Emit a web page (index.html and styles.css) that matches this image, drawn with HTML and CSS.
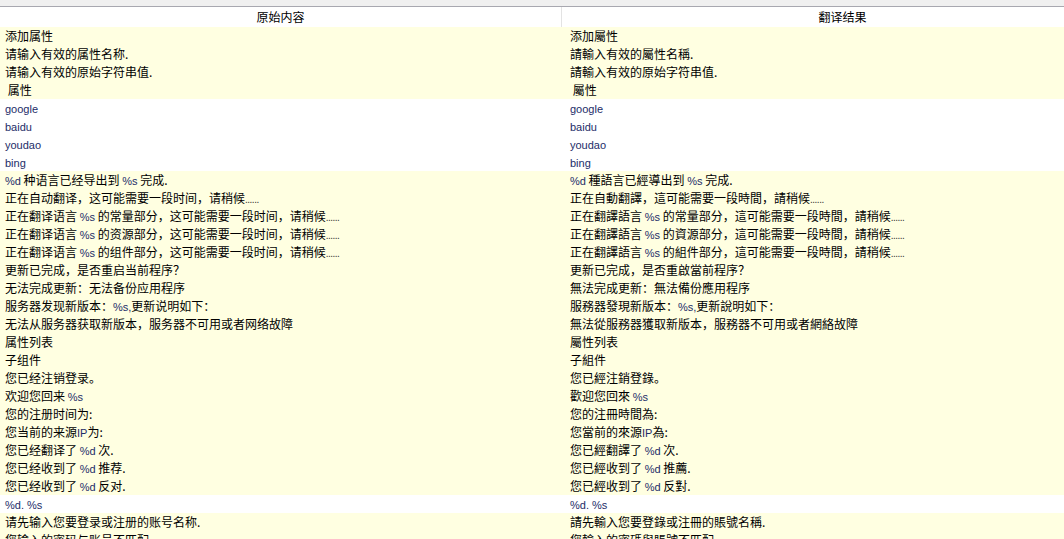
FILE: index.html
```html
<!DOCTYPE html>
<html lang="zh">
<head>
<meta charset="utf-8">
<title>翻译</title>
<link rel="stylesheet" href="styles.css">
</head>
<body>
<div class="topstrip"></div>
<div class="table">
  <div class="row head">
    <div class="cell hl">原始内容</div>
    <div class="cell hr">翻译结果</div>
  </div>
  <div class="row y"><div class="cell l">添加属性</div><div class="cell r">添加屬性</div></div>
  <div class="row y"><div class="cell l">请输入有效的属性名称.</div><div class="cell r">請輸入有效的屬性名稱.</div></div>
  <div class="row y"><div class="cell l">请输入有效的原始字符串值.</div><div class="cell r">請輸入有效的原始字符串值.</div></div>
  <div class="row y"><div class="cell l">&nbsp;属性</div><div class="cell r">&nbsp;屬性</div></div>
  <div class="row w"><div class="cell l"><span class="lt">google</span></div><div class="cell r"><span class="lt">google</span></div></div>
  <div class="row w"><div class="cell l"><span class="lt">baidu</span></div><div class="cell r"><span class="lt">baidu</span></div></div>
  <div class="row w"><div class="cell l"><span class="lt">youdao</span></div><div class="cell r"><span class="lt">youdao</span></div></div>
  <div class="row w"><div class="cell l"><span class="lt">bing</span></div><div class="cell r"><span class="lt">bing</span></div></div>
  <div class="row y"><div class="cell l"><span class="lt">%d</span> 种语言已经导出到 <span class="lt">%s</span> 完成.</div><div class="cell r"><span class="lt">%d</span> 種語言已經導出到 <span class="lt">%s</span> 完成.</div></div>
  <div class="row y"><div class="cell l">正在自动翻译，这可能需要一段时间，请稍候<span class="dots">......</span></div><div class="cell r">正在自動翻譯，這可能需要一段時間，請稍候<span class="dots">......</span></div></div>
  <div class="row y"><div class="cell l">正在翻译语言 <span class="lt">%s</span> 的常量部分，这可能需要一段时间，请稍候<span class="dots">......</span></div><div class="cell r">正在翻譯語言 <span class="lt">%s</span> 的常量部分，這可能需要一段時間，請稍候<span class="dots">......</span></div></div>
  <div class="row y"><div class="cell l">正在翻译语言 <span class="lt">%s</span> 的资源部分，这可能需要一段时间，请稍候<span class="dots">......</span></div><div class="cell r">正在翻譯語言 <span class="lt">%s</span> 的資源部分，這可能需要一段時間，請稍候<span class="dots">......</span></div></div>
  <div class="row y"><div class="cell l">正在翻译语言 <span class="lt">%s</span> 的组件部分，这可能需要一段时间，请稍候<span class="dots">......</span></div><div class="cell r">正在翻譯語言 <span class="lt">%s</span> 的組件部分，這可能需要一段時間，請稍候<span class="dots">......</span></div></div>
  <div class="row y"><div class="cell l">更新已完成，是否重启当前程序？</div><div class="cell r">更新已完成，是否重啟當前程序？</div></div>
  <div class="row y"><div class="cell l">无法完成更新：无法备份应用程序</div><div class="cell r">無法完成更新：無法備份應用程序</div></div>
  <div class="row y"><div class="cell l">服务器发现新版本：<span class="lt">%s,</span>更新说明如下：</div><div class="cell r">服務器發現新版本：<span class="lt">%s,</span>更新說明如下：</div></div>
  <div class="row y"><div class="cell l">无法从服务器获取新版本，服务器不可用或者网络故障</div><div class="cell r">無法從服務器獲取新版本，服務器不可用或者網絡故障</div></div>
  <div class="row y"><div class="cell l">属性列表</div><div class="cell r">屬性列表</div></div>
  <div class="row y"><div class="cell l">子组件</div><div class="cell r">子組件</div></div>
  <div class="row y"><div class="cell l">您已经注销登录。</div><div class="cell r">您已經注銷登錄。</div></div>
  <div class="row y"><div class="cell l">欢迎您回来 <span class="lt">%s</span></div><div class="cell r">歡迎您回來 <span class="lt">%s</span></div></div>
  <div class="row y"><div class="cell l">您的注册时间为:</div><div class="cell r">您的注冊時間為:</div></div>
  <div class="row y"><div class="cell l">您当前的来源<span class="lt">IP</span>为:</div><div class="cell r">您當前的來源<span class="lt">IP</span>為:</div></div>
  <div class="row y"><div class="cell l">您已经翻译了 <span class="lt">%d</span> 次.</div><div class="cell r">您已經翻譯了 <span class="lt">%d</span> 次.</div></div>
  <div class="row y"><div class="cell l">您已经收到了 <span class="lt">%d</span> 推荐.</div><div class="cell r">您已經收到了 <span class="lt">%d</span> 推薦.</div></div>
  <div class="row y"><div class="cell l">您已经收到了 <span class="lt">%d</span> 反对.</div><div class="cell r">您已經收到了 <span class="lt">%d</span> 反對.</div></div>
  <div class="row w"><div class="cell l"><span class="lt">%d. %s</span></div><div class="cell r"><span class="lt">%d. %s</span></div></div>
  <div class="row y"><div class="cell l">请先输入您要登录或注册的账号名称.</div><div class="cell r">請先輸入您要登錄或注冊的賬號名稱.</div></div>
  <div class="row y"><div class="cell l">您输入的密码与账号不匹配.</div><div class="cell r">您輸入的密碼與賬號不匹配.</div></div>
</div>
</body>
</html>
```
FILE: styles.css
```css
html, body {
  margin: 0;
  padding: 0;
  background: #ffffff;
  overflow: hidden;
  width: 1064px;
  height: 539px;
}
.topstrip {
  height: 6px;
  background: #f0f0f0;
  border-bottom: 1px solid #a8a8b0;
}
.table {
  width: 1123px;
  font-family: "Noto Sans CJK SC", "Liberation Sans", sans-serif;
  font-size: 12px;
  color: #000;
}
.row {
  display: grid;
  grid-template-columns: 562px 561px;
  height: 18px;
  line-height: 18px;
  white-space: nowrap;
}
.row.head {
  height: 20px;
  line-height: 20px;
  background: #ffffff;
}
.row.y { background: #ffffe1; }
.row.w { background: #ffffff; }
.cell { overflow: hidden; }
.hl {
  text-align: center;
  border-right: 1px solid #e3e3e3;
}
.hr { text-align: center; }
.l { padding-left: 5px; }
.r {
  padding-left: 8px;
  font-family: "Noto Sans CJK TC", "Liberation Sans", sans-serif;
}
.lt {
  font-family: "Liberation Sans", sans-serif;
  font-size: 11px;
  color: #1d2c68;
}
.dots {
  font-family: "Liberation Sans", sans-serif;
  font-size: 10px;
  color: #333;
  letter-spacing: -0.5px;
}
```
